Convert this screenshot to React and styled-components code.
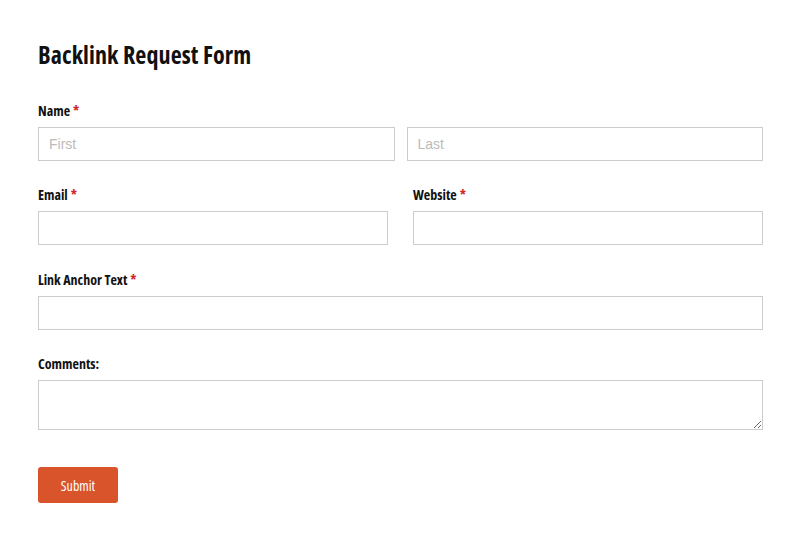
import React from "react"
import styled, { createGlobalStyle } from "styled-components"

const GlobalStyle = createGlobalStyle`
  body {
    margin: 0;
    background: #ffffff;
    font-family: "Open Sans", "Liberation Sans", sans-serif;
  }
`

const Page = styled.div`
  padding: 40px 37px 38px 38px;
`

const Title = styled.h2`
  margin: 0 0 31px;
  font-size: 24px;
  line-height: 30px;
  font-weight: 700;
  font-stretch: 75%;
  letter-spacing: 0.1px;
  color: #111111;
`

const Form = styled.form`
  display: flex;
  flex-direction: column;
  gap: 24px;
`

const Row = styled.div`
  display: grid;
  grid-template-columns: 1fr 1fr;
  column-gap: ${props => props.gap || 0}px;
`

const Field = styled.div`
  display: flex;
  flex-direction: column;
  margin-top: ${props => (props.shift ? 1 : 0)}px;
`

const Label = styled.label`
  font-size: 14px;
  line-height: 20px;
  font-weight: 700;
  font-stretch: 75%;
  color: #111111;
  margin-bottom: 6px;
`

const Required = styled.span`
  color: #d0252d;
  margin-left: 3px;
`

const Input = styled.input`
  box-sizing: border-box;
  width: 100%;
  height: 34px;
  border: 1px solid #cccccc;
  border-radius: 0;
  padding: 0 10px;
  font-family: "Liberation Sans", Arial, sans-serif;
  font-size: 14px;
  color: #333333;
  outline: none;

  &::placeholder {
    color: #bbbbbb;
  }
`

const TextArea = styled.textarea`
  box-sizing: border-box;
  display: block;
  width: 100%;
  height: 50px;
  border: 1px solid #cccccc;
  padding: 6px 10px;
  font-family: "Liberation Sans", Arial, sans-serif;
  font-size: 14px;
  resize: vertical;
  outline: none;
`

const Submit = styled.button`
  margin-top: 13px;
  align-self: flex-start;
  width: 80px;
  height: 36px;
  border: none;
  border-radius: 3px;
  background: #d9532b;
  color: #ffffff;
  font-family: "Open Sans", "Liberation Sans", sans-serif;
  font-stretch: 75%;
  font-size: 14px;
  cursor: pointer;
`

export default function App() {
  return (
    <Page>
      <GlobalStyle />
      <Title>Backlink Request Form</Title>
      <Form onSubmit={e => e.preventDefault()}>
        <Field>
          <Label>Name<Required>*</Required></Label>
          <Row gap={12}>
            <Input placeholder="First" />
            <Input placeholder="Last" />
          </Row>
        </Field>
        <Row gap={25}>
          <Field>
            <Label>Email<Required>*</Required></Label>
            <Input />
          </Field>
          <Field>
            <Label>Website<Required>*</Required></Label>
            <Input />
          </Field>
        </Row>
        <Field shift>
          <Label>Link Anchor Text<Required>*</Required></Label>
          <Input />
        </Field>
        <Field>
          <Label>Comments:</Label>
          <TextArea />
        </Field>
        <Submit type="submit">Submit</Submit>
      </Form>
    </Page>
  )
}
